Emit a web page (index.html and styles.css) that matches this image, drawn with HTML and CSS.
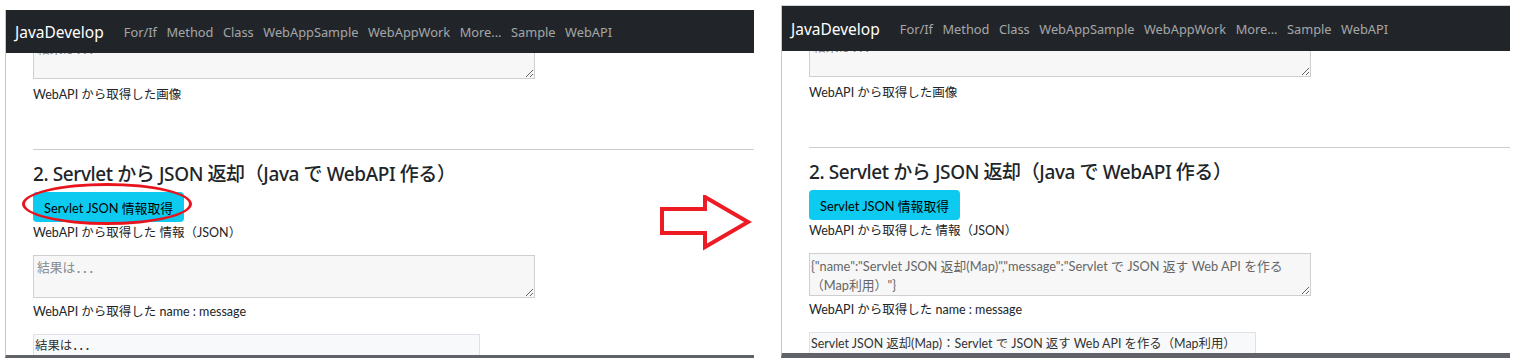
FILE: index.html
```html
<!DOCTYPE html>
<html lang="ja">
<head>
  <meta charset="UTF-8">
  <meta name="viewport" content="width=device-width, initial-scale=1.0">
  <title>Servlet JSON 返却</title>
  <link rel="stylesheet" href="styles.css">
</head>
<body>
  <div class="shot">
    <!-- before -->
    <div class="panel panel-before">
      <nav class="navbar">
        <span class="brand">JavaDevelop</span>
        <span class="nav-link">For/If</span>
        <span class="nav-link">Method</span>
        <span class="nav-link">Class</span>
        <span class="nav-link">WebAppSample</span>
        <span class="nav-link">WebAppWork</span>
        <span class="nav-link">More...</span>
        <span class="nav-link">Sample</span>
        <span class="nav-link">WebAPI</span>
      </nav>
      <div class="content">
        <textarea class="result-area result-top" readonly placeholder="結果は．．．"></textarea>
        <p class="label">WebAPI から取得した画像</p>
        <hr class="divider">
        <h3 class="section-title">2. Servlet から JSON 返却（Java で WebAPI 作る）</h3>
        <div class="btn-wrap">
          <button class="btn-info">Servlet JSON 情報取得</button>
          <span class="mark"></span>
        </div>
        <p class="label label-tight">WebAPI から取得した 情報（JSON）</p>
        <textarea class="result-area" readonly placeholder="結果は．．．"></textarea>
        <p class="label label-short">WebAPI から取得した name : message</p>
        <input class="result-line" type="text" readonly placeholder="結果は．．．">
      </div>
    </div>

    <!-- after -->
    <div class="panel panel-after">
      <nav class="navbar">
        <span class="brand">JavaDevelop</span>
        <span class="nav-link">For/If</span>
        <span class="nav-link">Method</span>
        <span class="nav-link">Class</span>
        <span class="nav-link">WebAppSample</span>
        <span class="nav-link">WebAppWork</span>
        <span class="nav-link">More...</span>
        <span class="nav-link">Sample</span>
        <span class="nav-link">WebAPI</span>
      </nav>
      <div class="content">
        <textarea class="result-area result-top" readonly placeholder="結果は．．．"></textarea>
        <p class="label">WebAPI から取得した画像</p>
        <hr class="divider">
        <h3 class="section-title">2. Servlet から JSON 返却（Java で WebAPI 作る）</h3>
        <div class="btn-wrap">
          <button class="btn-info">Servlet JSON 情報取得</button>
        </div>
        <p class="label label-tight">WebAPI から取得した 情報（JSON）</p>
        <textarea class="result-area filled" readonly>{"name":"Servlet JSON 返却(Map)","message":"Servlet で JSON 返す Web API を作る（Map利用）"}</textarea>
        <p class="label label-short">WebAPI から取得した name : message</p>
        <input class="result-line filled" type="text" readonly value="Servlet JSON 返却(Map)：Servlet で JSON 返す Web API を作る（Map利用）">
      </div>
    </div>

    <svg class="arrow" width="96" height="56" viewBox="0 0 96 56">
      <path d="M 3,14 L 46,14 L 46,2 L 89,27 L 46,52 L 46,38 L 3,38 Z"
            fill="none" stroke="#ed1c24" stroke-width="4" stroke-linejoin="miter"></path>
    </svg>
  </div>
</body>
</html>
```

FILE: styles.css
```css
html, body {
  margin: 0;
  padding: 0;
  background-color: #ffffff;
  overflow: hidden;
}

body {
  font-family: "Lato", "Noto Sans CJK JP", sans-serif;
  font-size: 12.5px;
  color: #212529;
}

.shot {
  position: relative;
  display: flex;
  align-items: flex-start;
  padding-left: 5px;
  height: 358px;
}

.panel {
  display: flex;
  flex-direction: column;
  box-sizing: border-box;
  border-left: 1px solid #c8c8c8;
  overflow: hidden;
  background-color: #ffffff;
}

.panel-before {
  width: 749px;
  margin-top: 10px;
  height: 348px;
  border-bottom: 3px solid #5f6368;
}

.panel-after {
  width: 729px;
  margin-left: 27px;
  margin-top: 5px;
  height: 353px;
  border-top: 1px solid #d4d4d4;
  border-bottom: 5px solid #5f6368;
}

.navbar {
  position: relative;
  z-index: 2;
  display: flex;
  align-items: center;
  flex-shrink: 0;
  height: 43px;
  padding-left: 9px;
  font-family: "Noto Sans", "Noto Sans CJK JP", sans-serif;
  background-color: #212529;
}

.panel-after .navbar {
  height: 45px;
}

.brand {
  font-size: 15.5px;
  color: #ffffff;
  margin-right: 20px;
}

.nav-link {
  font-size: 12.8px;
  color: rgba(255, 255, 255, 0.6);
  margin-right: 9.5px;
}

.content {
  display: flex;
  flex-direction: column;
  align-items: flex-start;
  padding-left: 27px;
}

.result-area {
  box-sizing: border-box;
  width: 502px;
  height: 43px;
  margin: 12px 0 0;
  padding: 2px 3px;
  font-family: inherit;
  font-size: 12.8px;
  line-height: 19px;
  color: #666666;
  background-color: #f7f7f7;
  border: 1px solid #cfcfcf;
  border-radius: 0;
  resize: vertical;
  outline: none;
}

.result-top {
  margin-top: -17px;
}

.result-area::placeholder {
  color: #8a8a8a;
}

.result-area.filled {
  padding: 3px 1px;
}

.label {
  margin: 6px 0 0;
  line-height: 20px;
}

.label-tight {
  margin-top: 1px;
}

.label-short {
  margin-top: 4px;
}

.divider {
  align-self: stretch;
  margin: 44px 0 0 0;
  border: 0;
  border-top: 1px solid #cdcdcd;
}

.section-title {
  margin: 12px 0 0;
  font-family: "Noto Sans", "Noto Sans CJK JP", sans-serif;
  font-size: 19px;
  font-weight: 500;
  letter-spacing: -0.4px;
  line-height: 24px;
}

.btn-wrap {
  position: relative;
  margin-top: 6px;
}

.btn-info {
  display: block;
  height: 30px;
  padding: 0 11px;
  font-family: inherit;
  font-size: 12.8px;
  color: #000000;
  background-color: #0dcaf0;
  border: 0;
  border-radius: 4px;
}

.mark {
  position: absolute;
  left: -11px;
  top: -9px;
  width: 170px;
  height: 42px;
  box-sizing: border-box;
  border: 3.5px solid #e8141c;
  border-radius: 50%;
}

.result-line {
  box-sizing: border-box;
  width: 447px;
  height: 22px;
  margin-top: 12px;
  padding: 1px 1px;
  font-family: inherit;
  font-size: 12.4px;
  color: #333333;
  background-color: #f8f9fa;
  border: 1px solid #dee2e6;
  outline: none;
}

.result-line::placeholder {
  color: #333333;
}

.arrow {
  position: absolute;
  left: 659px;
  top: 195px;
}
```
